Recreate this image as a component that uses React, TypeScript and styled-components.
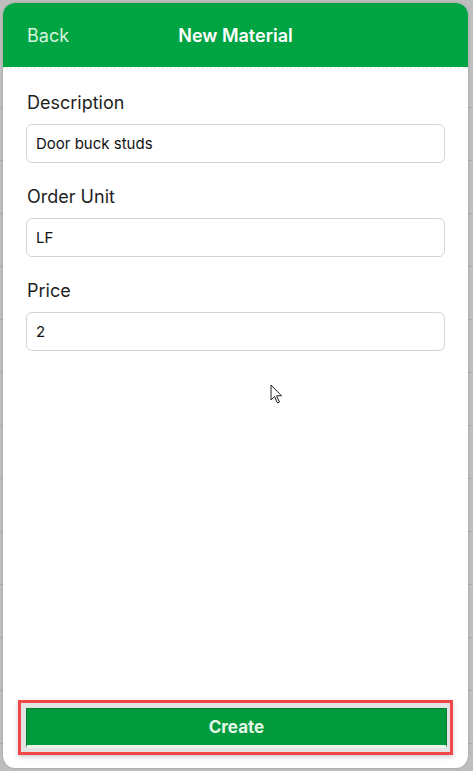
import React from "react";
import styled, { createGlobalStyle } from "styled-components";

const Global = createGlobalStyle`
  html, body { margin: 0; padding: 0; }
  body {
    width: 473px;
    height: 771px;
    overflow: hidden;
    background: #bdbdbd;
    font-family: Inter, "Liberation Sans", Arial, sans-serif;
  }
`;

const Screen = styled.div`
  position: relative;
  width: 473px;
  height: 771px;
  background: #bebebe;
  overflow: hidden;
`;

const BackList = styled.div`
  display: flex;
  flex-direction: column;
  padding-top: 55px;
`;

const BackRow = styled.div`
  height: 52px;
  border-bottom: 1px solid #a9a9a9;
  display: flex;
  align-items: center;
  font-size: 18px;
  color: #222;
  margin-left: -12px;
`;

const Modal = styled.div`
  position: absolute;
  left: 3px;
  top: 3px;
  width: 465px;
  height: 765px;
  background: #ffffff;
  border-radius: 12px;
  overflow: hidden;
  display: flex;
  flex-direction: column;
  box-shadow: 0 0 2px rgba(0, 0, 0, 0.25);
`;

const Header = styled.div`
  height: 64px;
  background: #00a443;
  display: grid;
  grid-template-columns: 1fr auto 1fr;
  align-items: center;
  padding: 0 24px;
  flex-shrink: 0;
`;

const BackLink = styled.span`
  font-size: 18px;
  color: #d6f5df;
  justify-self: start;
`;

const Title = styled.span`
  font-size: 18px;
  font-weight: 600;
  color: #ffffff;
`;

const Form = styled.div`
  flex: 1;
  display: flex;
  flex-direction: column;
  gap: 23px;
  padding: 23px 23px 0 23px;
  border-top: 2px dotted #f4f4ec;
`;

const Field = styled.div`
  display: flex;
  flex-direction: column;
  gap: 10px;
`;

const Label = styled.div`
  font-size: 18px;
  color: #1e1e1e;
  line-height: 22px;
  padding-left: 1px;
`;

const Input = styled.div`
  height: 39px;
  border: 1px solid #d4d4d4;
  border-radius: 6px;
  display: flex;
  align-items: center;
  padding-left: 9px;
  font-size: 15px;
  color: #111;
  width: 419px;
  box-sizing: border-box;
`;

const Footer = styled.div`
  display: flex;
  justify-content: center;
  padding: 0 0 13px 0;
`;

const Highlight = styled.div`
  border: 3px solid #f04848;
  padding: 5px 5px 4px 5px;
  width: 435px;
  box-sizing: border-box;
  background: #e4e4e4;
  box-shadow: 0 2px 5px rgba(0, 0, 0, 0.2);
`;

const CreateButton = styled.button`
  width: 100%;
  height: 36px;
  background: #019a3c;
  border: 1px solid #0a7a33;
  border-bottom: 3px solid #e8f6ea;
  color: #e6f8ea;
  font-family: inherit;
  font-weight: 700;
  font-size: 17px;
  display: flex;
  align-items: center;
  justify-content: center;
  box-sizing: content-box;
  padding: 0;
`;

const Cursor = styled.svg`
  position: absolute;
  left: 270px;
  top: 384px;
`;

export default function App() {
  const rows = ["o", ",", "c", "a", "s", "n", "e", "z", "", "", "", "", ""];
  return (
    <Screen>
      <Global />
      <BackList>
        {rows.map((r, i) => (
          <BackRow key={i}>{r}</BackRow>
        ))}
      </BackList>
      <Modal>
        <Header>
          <BackLink>Back</BackLink>
          <Title>New Material</Title>
          <span />
        </Header>
        <Form>
          <Field>
            <Label>Description</Label>
            <Input>Door buck studs</Input>
          </Field>
          <Field>
            <Label>Order Unit</Label>
            <Input>LF</Input>
          </Field>
          <Field>
            <Label>Price</Label>
            <Input>2</Input>
          </Field>
        </Form>
        <Footer>
          <Highlight>
            <CreateButton>Create</CreateButton>
          </Highlight>
        </Footer>
      </Modal>
      <Cursor width="14" height="22" viewBox="0 0 14 22">
        <path d="M1 1 L1 16 L4.5 12.5 L7.5 19 L9.5 18 L6.5 11.8 L11.5 11.8 Z" fill="#fff" stroke="#222" strokeWidth="1" strokeLinejoin="round" />
      </Cursor>
    </Screen>
  );
}
